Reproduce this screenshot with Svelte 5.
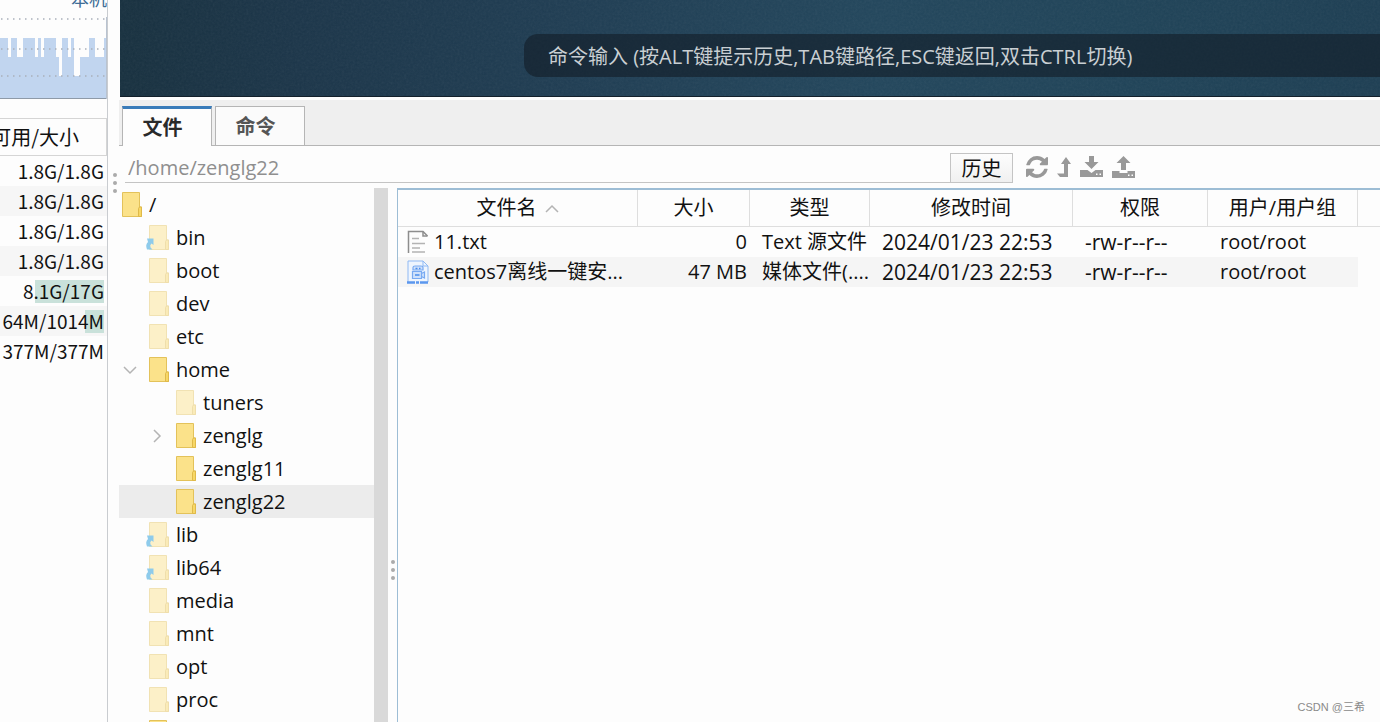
<script>
  const disks = [
    { text: '1.8G/1.8G', fill: 0 },
    { text: '1.8G/1.8G', fill: 0 },
    { text: '1.8G/1.8G', fill: 0 },
    { text: '1.8G/1.8G', fill: 0 },
    { text: '8.1G/17G', fill: 69 },
    { text: '64M/1014M', fill: 19 },
    { text: '377M/377M', fill: 0 }
  ];

  const tree = [
    { name: '/', level: 0, own: true },
    { name: 'bin', level: 1, link: true },
    { name: 'boot', level: 1 },
    { name: 'dev', level: 1 },
    { name: 'etc', level: 1 },
    { name: 'home', level: 1, own: true, open: 'yes' },
    { name: 'tuners', level: 2 },
    { name: 'zenglg', level: 2, own: true, open: 'no' },
    { name: 'zenglg11', level: 2, own: true },
    { name: 'zenglg22', level: 2, own: true },
    { name: 'lib', level: 1, link: true },
    { name: 'lib64', level: 1, link: true },
    { name: 'media', level: 1 },
    { name: 'mnt', level: 1 },
    { name: 'opt', level: 1 },
    { name: 'proc', level: 1 },
    { name: '', level: 1, own: true }
  ];

  const files = [
    { kind: 'text', name: '11.txt', size: '0', type: 'Text 源文件', time: '2024/01/23 22:53', mode: '-rw-r--r--', owner: 'root/root' },
    { kind: 'media', name: 'centos7离线一键安...', size: '47 MB', type: '媒体文件(....', time: '2024/01/23 22:53', mode: '-rw-r--r--', owner: 'root/root' }
  ];

  let path = $state('/home/zenglg22');
  let command = $state('');
  let tab = $state('files');
  let selected = $state('zenglg22');
</script>

<div class="app">
  <aside class="side">
    <div class="host">本机</div>
    <svg class="chart" viewBox="0 0 107 82" preserveAspectRatio="none" aria-hidden="true">
      <path fill="#c1d5ef" d="M0 21H8V40H11V21H17V40H23V21H35V40H38V21H41V40H44V21H56V40H59V59H62V21H68V40H71V21H74V59H80V40H89V21H95V40H104V21H107V82H0Z" />
      <g stroke="#a9b0ba" stroke-width="1.5" stroke-dasharray="1.5 4.5">
        <path d="M1 2H105M1 32H105M1 59H105" />
      </g>
      <path d="M0 81.5H107" stroke="#8e9aa8" />
      <path d="M106.500 0V82" stroke="#b9c3d0" />
    </svg>
    <table class="disks">
      <thead><tr><th>可用/大小</th></tr></thead>
      <tbody>
        {#each disks as d}
          <tr><td><span class="meter" style="width: {d.fill}px"></span><span class="amount">{d.text}</span></td></tr>
        {/each}
      </tbody>
    </table>
  </aside>

  <div class="split"><i></i><i></i><i></i></div>

  <main class="main">
    <div class="terminal">
      <svg class="grain" aria-hidden="true">
        <filter id="grain">
          <feTurbulence type="fractalNoise" baseFrequency="0.45" numOctaves="2" seed="4" />
          <feColorMatrix type="saturate" values="0" />
        </filter>
        <rect width="100%" height="100%" filter="url(#grain)" />
      </svg>
      <input class="command" aria-label="命令输入" bind:value={command} placeholder="命令输入 (按ALT键提示历史,TAB键路径,ESC键返回,双击CTRL切换)" />
    </div>

    <div class="tabs">
      <button class:active={tab === 'files'} onclick={() => (tab = 'files')}>文件</button>
      <button class:active={tab === 'commands'} onclick={() => (tab = 'commands')}>命令</button>
    </div>

    <div class="pathbar">
      <input class="path" aria-label="路径" bind:value={path} />
      <button class="history">历史</button>
      <div class="tools">
        <button aria-label="刷新">
          <svg width="22" height="22" viewBox="0 0 1536 1536"><path fill="#999" d="M1511 928q0 5-1 7-64 268-268 434.500T764 1536q-146 0-282.500-55T238 1324l-129 129q-19 19-45 19t-45-19-19-45V960q0-26 19-45t45-19h448q26 0 45 19t19 45-19 45l-137 137q71 66 161 102t187 36q134 0 250-65t186-179q11-17 53-117 8-23 30-23h192q13 0 22.500 9.500t9.500 22.500zm25-800v448q0 26-19 45t-45 19h-448q-26 0-45-19t-19-45 19-45l138-138Q969 256 768 256q-134 0-250 65T332 500q-11 17-53 117-8 23-30 23H50q-13 0-22.500-9.500T18 608v-7q65-268 270-434.500T768 0q146 0 284 55.500T1297 212l130-129q19-19 45-19t45 19 19 45z" /></svg>
        </button>
        <button aria-label="上级目录">
          <svg width="14" height="20" viewBox="0 0 14 20"><path fill="#999" d="M9 0L14 7H11V20H3L0 16.500H7V7H4Z" /></svg>
        </button>
        <button aria-label="下载">
          <svg width="23" height="22" viewBox="0 0 23 22"><path fill="#999" d="M9 0H14V6H18.500L11.500 13 4.500 6H9ZM0 14H7.500L11.500 17 15.500 14H23V21H0Z" /><path fill="#fff" d="M16 17.500h1.500V19H16zM19.500 17.500H21V19h-1.500z" /></svg>
        </button>
        <button aria-label="上传">
          <svg width="23" height="22" viewBox="0 0 23 22"><path fill="#999" d="M11.500 0L18.500 7H14V14H9V7H4.500ZM0 15H7.500V17H15.500V15H23V22H0Z" /><path fill="#fff" d="M16 18.500h1.500V20H16zM19.500 18.500H21V20h-1.500z" /></svg>
        </button>
      </div>
    </div>

    <div class="browser">
      <ul class="tree">
        {#each tree as n}
          <li>
            <button
              class="node"
              class:selected={n.name !== '' && n.name === selected}
              style="padding-left: {3 + Math.max(n.level - 1, 0) * 27}px"
              aria-label={n.name ? undefined : '目录'}
              onclick={() => (selected = n.name)}
            >
              {#if n.level > 0}
                <svg class="twist" width="14" height="14" viewBox="0 0 14 14">
                  {#if n.open === 'yes'}
                    <path d="M1 4L7 10 13 4" fill="none" stroke="#b4b4b4" stroke-width="1.500" />
                  {:else if n.open === 'no'}
                    <path d="M4 1L10 7 4 13" fill="none" stroke="#b4b4b4" stroke-width="1.500" />
                  {/if}
                </svg>
              {/if}
              <svg class="folder" width="20" height="25" viewBox="0 0 20 25">
                <g opacity={n.own ? 1 : 0.45}>
                  <path d="M.5.5H17.500V15H19.500V24.500H.5Z" fill="#fbe28a" stroke="#e3c25a" />
                  <path d="M16.500 24V16.500L17.500 15H19.500V24.500H16.500Z" fill="#f7d766" stroke="#dfb94a" />
                </g>
                {#if n.link}
                  <path d="M-1 17L-2 13.500H4.500V20L2.500 18.500Q.5 20 1.500 22.500L3.500 24.500H-2Q-4 19.500-1 17Z" fill="#8ecbeb" />
                {/if}
              </svg>
              <span>{n.name}</span>
            </button>
          </li>
        {/each}
      </ul>
      <div class="scroll"></div>
      <div class="split inner"><i></i><i></i><i></i></div>

      <div class="list">
        <table class="files">
          <colgroup>
            <col class="c-name" /><col class="c-size" /><col class="c-type" /><col class="c-time" /><col class="c-mode" /><col class="c-owner" /><col />
          </colgroup>
          <thead>
            <tr>
              <th>文件名<svg class="sort" width="14" height="8" viewBox="0 0 14 8"><path d="M1 7L7 1 13 7" fill="none" stroke="#b4b4b4" stroke-width="1.500" /></svg></th>
              <th>大小</th>
              <th>类型</th>
              <th>修改时间</th>
              <th>权限</th>
              <th>用户/用户组</th>
              <td></td>
            </tr>
          </thead>
          <tbody>
            {#each files as f}
              <tr>
                <td>
                  <div class="file">
                    {#if f.kind === 'text'}
                      <svg width="22" height="24" viewBox="0 0 22 24">
                        <path d="M1.500 23V1.500H16L20.500 6" fill="#fcfcfc" stroke="#8d8d8d" stroke-width="1.500" />
                        <path d="M16 1.500V6H20.500" fill="none" stroke="#8d8d8d" stroke-width="1.500" />
                        <path d="M5 8.500H12M5 13.500H18M5 18H13M5 22H18" stroke="#b3b3b3" stroke-width="1.500" />
                      </svg>
                    {:else}
                      <svg width="22" height="24" viewBox="0 0 22 24">
                        <path d="M1 22V1H16L21 6V22" fill="#eef5fe" stroke="#8fb9f3" />
                        <path d="M16 1V6H21" fill="none" stroke="#8fb9f3" />
                        <path d="M0 22.500H22" stroke="#5b97ee" stroke-width="2.500" stroke-dasharray="8 1 3 1" />
                        <path d="M6 10V7.500Q6 6 8 6H14Q16 6 16 7.500V10ZM5.500 11.500H14.500V18.500H5.500ZM14.500 13.500L17.500 12V18L14.500 16.500" fill="#cfe1fb" stroke="#78aaf2" stroke-width="1.200" />
                        <path d="M8 15H12.500M8.500 8.500H10.500M12 8.500H13.500" stroke="#4a8dec" stroke-width="1.500" />
                      </svg>
                    {/if}
                    <span>{f.name}</span>
                  </div>
                </td>
                <td class="num">{f.size}</td>
                <td>{f.type}</td>
                <td class="wide">{f.time}</td>
                <td class="wide">{f.mode}</td>
                <td>{f.owner}</td>
                <td></td>
              </tr>
            {/each}
          </tbody>
        </table>
      </div>
    </div>
  </main>

  <div class="credit">CSDN @三希</div>
</div>

<style>
  :global(body) {
    background: #fdfdfd;
  }
  .app {
    position: relative;
    display: grid;
    grid-template-columns: 108px 11px minmax(0, 1fr);
    height: 100vh;
    overflow: hidden;
    background: #fdfdfd;
    color: #111;
    font: 20px/30px 'Open Sans', 'Noto Sans CJK SC', sans-serif;
  }
  .app * {
    box-sizing: border-box;
  }
  button,
  input {
    font: inherit;
    color: inherit;
    margin: 0;
    padding: 0;
    border: 0;
    background: none;
    outline: 0;
  }
  button {
    cursor: pointer;
  }
  svg {
    display: block;
    flex: none;
    overflow: visible;
  }
  table {
    border-collapse: separate;
    border-spacing: 0;
    table-layout: fixed;
    width: 100%;
  }
  th {
    font-weight: 400;
    padding: 0;
  }
  td {
    height: 30px;
    padding: 0;
    white-space: nowrap;
  }

  .side {
    display: flex;
    flex-direction: column;
    min-width: 0;
    overflow: hidden;
    border-right: 1px solid #c9ccd0;
  }
  .host {
    display: flex;
    justify-content: flex-end;
    align-items: flex-end;
    height: 17px;
    padding-bottom: 3px;
    line-height: 30px;
    font-size: 18px;
    color: #3f6d96;
  }
  .chart {
    width: 100%;
    height: 82px;
    margin-bottom: 19px;
  }
  .disks {
    font-family: 'Noto Sans CJK SC', sans-serif;
  }
  .disks th {
    height: 38px;
    border: solid #d5d5d5;
    border-width: 1px 1px 1px 0;
    text-align: right;
    padding-right: 28px;
    white-space: nowrap;
    direction: rtl;
  }
  .disks td {
    position: relative;
    text-align: right;
    padding-right: 3px;
    font-size: 19px;
    direction: rtl;
  }
  .disks tr:nth-child(even) td {
    background: #f6f6f6;
  }
  .meter {
    position: absolute;
    right: 3px;
    top: 4px;
    height: 23px;
    background: #c9e1da;
  }
  .amount {
    position: relative;
    direction: ltr;
    unicode-bidi: isolate;
  }

  .split {
    display: flex;
    flex-direction: column;
    align-items: center;
    gap: 4px;
    padding: 173px 0 0 3px;
  }
  .split i {
    width: 4px;
    height: 4px;
    border-radius: 50%;
    background: #ababab;
  }
  .split.inner {
    justify-content: center;
    padding: 230px 0 0;
  }

  .main {
    display: flex;
    flex-direction: column;
    min-width: 0;
    min-height: 0;
  }
  .terminal {
    position: relative;
    display: flex;
    align-items: flex-end;
    height: 97px;
    padding: 0 0 19px 404px;
    margin-left: 1px;
    border-bottom: 1px solid #13202b;
    background: linear-gradient(90deg, #17303f 0%, #1b3549 14%, #1f3d53 36%, #22465c 60%, #1f4358 80%, #1d3e53 100%);
  }
  .grain {
    position: absolute;
    inset: 0;
    width: 100%;
    height: 100%;
    opacity: 0.07;
    overflow: hidden;
  }
  .command {
    position: relative;
    flex: 1;
    min-width: 0;
    height: 43px;
    padding: 2px 24px 0;
    border-radius: 14px 0 0 14px;
    background: rgba(18, 28, 38, 0.6);
    color: #c9cfd3;
  }
  .command::placeholder {
    color: #c9cfd3;
    opacity: 1;
  }

  .tabs {
    display: flex;
    gap: 3px;
    padding: 6px 3px 0;
    margin-top: 3px;
    background: #efefef;
    box-shadow: inset 0 -1px #b5b5b5;
  }
  .tabs button {
    width: 90px;
    height: 40px;
    padding: 2px 9px 0 0;
    border: 1px solid #b5b5b5;
    background: #fbfbfb;
    font-weight: 700;
    color: #555;
  }
  .tabs .active {
    padding-top: 0;
    border-top: 3px solid #3a7cba;
    border-bottom: 0;
    background: #fdfdfd;
    color: #2a2a2a;
  }

  .pathbar {
    display: flex;
    align-items: flex-end;
    height: 37px;
    margin: 0 0 5px 6px;
  }
  .path {
    flex: 0 1 825px;
    min-width: 0;
    height: 31px;
    padding-left: 3px;
    border-bottom: 1px solid #c4c4c4;
    color: #8f8f8f;
  }
  .history {
    width: 63px;
    height: 30px;
    border: 1px solid #c4c4c4;
    background: linear-gradient(#fdfdfd, #f0f0f0);
  }
  .tools {
    display: flex;
    align-items: center;
    gap: 9px;
    height: 32px;
    margin-left: 13px;
  }

  .browser {
    display: grid;
    grid-template-columns: 255px 14px 9px minmax(0, 1fr);
    flex: 1;
    min-height: 0;
  }
  .tree {
    list-style: none;
    margin: 0;
    padding: 0;
    overflow: hidden;
  }
  .node {
    display: flex;
    align-items: center;
    width: 100%;
    height: 33px;
    text-align: left;
  }
  .node.selected {
    background: #ececec;
  }
  .twist {
    margin: 0 12px 0 1px;
  }
  .folder {
    margin-right: 7px;
  }
  .scroll {
    background: #d9d9d9;
  }
  .list {
    border: solid #9dbdd5;
    border-width: 2px 0 0 1px;
    overflow: hidden;
  }
  .c-name {
    width: 240px;
  }
  .c-size {
    width: 112px;
  }
  .c-type {
    width: 120px;
  }
  .c-time {
    width: 203px;
  }
  .c-mode {
    width: 135px;
  }
  .c-owner {
    width: 150px;
  }
  .files th,
  .files thead td {
    height: 37px;
    border-bottom: 1px solid #dedede;
  }
  .files th {
    border-right: 1px solid #dedede;
  }
  .sort {
    display: inline-block;
    margin-left: 8px;
    vertical-align: 2px;
  }
  .files tbody td {
    padding-left: 12px;
  }
  .files tbody td:first-child {
    padding-left: 9px;
  }
  .files tbody tr:nth-child(even) td:not(:last-child) {
    background: #f5f5f5;
  }
  .files .num {
    text-align: right;
    padding-right: 3px;
  }
  .files .wide {
    font-size: 21px;
  }
  .file {
    display: flex;
    align-items: center;
    gap: 5px;
  }
  .credit {
    position: absolute;
    right: 15px;
    bottom: 6px;
    font: 11px/18px 'Liberation Sans', 'Noto Sans CJK SC', sans-serif;
    color: #8a8a8a;
  }
</style>
